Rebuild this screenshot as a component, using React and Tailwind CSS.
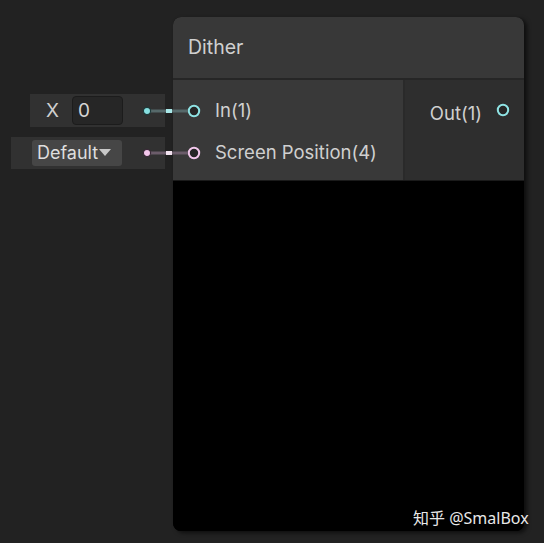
import React from "react";

function Ring({ color }) {
  return (
    <svg width="14" height="14" viewBox="0 0 14 14" className="shrink-0">
      <circle cx="7" cy="7" r="5.2" fill="#262626" stroke={color} strokeWidth="2" />
    </svg>
  );
}

export default function App() {
  const font = { fontFamily: "Inter, 'Noto Sans', sans-serif" };
  return (
    <div className="relative w-[544px] h-[543px] bg-[#222222] flex overflow-hidden" style={font}>
      {/* left fields */}
      <div className="w-[173px] shrink-0 pt-[94px] flex flex-col items-end gap-[10px]">
        <div className="w-[135px] h-[33px] mr-[8px] bg-[#313131] flex items-center">
          <span className="ml-[16px] text-[19px] text-[#cfcfcf] leading-none">X</span>
          <div className="ml-[13px] w-[51px] h-[29px] rounded-[4px] bg-[#262626] border border-[#1c1c1c] flex items-center">
            <span className="ml-[5px] text-[19px] text-[#d4d4d4] leading-none">0</span>
          </div>
        </div>
        <div className="w-[154px] h-[32px] mr-[8px] bg-[#313131] flex items-center">
          <div className="ml-[21px] w-[90px] h-[26px] rounded-[3px] bg-[#464646] flex items-center">
            <span className="ml-[5px] text-[18px] text-[#dedede] leading-none">Default</span>
            <svg width="12" height="8" viewBox="0 0 12 8" className="ml-[1px]">
              <polygon points="0,0 12,0 6,7" fill="#c8c8c8" />
            </svg>
          </div>
        </div>
      </div>

      {/* node */}
      <div className="mt-[17px] w-[351px] h-[514px] rounded-[8px] bg-black flex flex-col overflow-hidden shadow-[3px_2px_4px_rgba(0,0,0,0.6)]">
        <div className="h-[63px] shrink-0 bg-[#383838] border-b-2 border-[#262626] flex items-center pl-[15px]">
          <span className="text-[19.5px] text-[#d0d0d0]">Dither</span>
        </div>
        <div className="h-[101px] shrink-0 flex border-b border-[#1a1a1a]">
          <div className="w-[232px] bg-[#393939] border-r-2 border-[#2a2a2a] flex flex-col pt-[10px]">
            <div className="h-[42px] flex items-center pl-[14px] gap-[14px]">
              <Ring color="#8fe3e4" />
              <span className="text-[18.5px] text-[#d0d0d0]">In(1)</span>
            </div>
            <div className="h-[42px] flex items-center pl-[14px] gap-[14px]">
              <Ring color="#f3c8ec" />
              <span className="text-[18.5px] text-[#d0d0d0]">Screen Position(4)</span>
            </div>
          </div>
          <div className="flex-1 bg-[#2e2e2e] flex items-start justify-end pt-[20px] pr-[14px] gap-[14px]">
            <span className="text-[18.5px] text-[#d0d0d0] leading-[26px]">Out(1)</span>
            <div className="pt-[3px]"><Ring color="#8fe3e4" /></div>
          </div>
        </div>
        <div className="flex-1 bg-black" />
      </div>

      {/* wires */}
      <svg className="absolute left-[140px] top-[100px]" width="50" height="64" viewBox="0 0 50 64">
        <line x1="8" y1="11" x2="48" y2="11" stroke="#56696a" strokeWidth="3" />
        <rect x="26" y="9" width="6" height="4" fill="#a9e8e8" />
        <circle cx="7" cy="11" r="3.6" fill="#86dfe0" stroke="#1e3a3a" strokeWidth="1.2" />
        <line x1="8" y1="53" x2="48" y2="53" stroke="#6b5c6a" strokeWidth="3" />
        <rect x="26" y="51" width="6" height="4" fill="#f2e2ef" />
        <circle cx="7" cy="53" r="3.6" fill="#f2c6ea" stroke="#3a2a38" strokeWidth="1.2" />
      </svg>

      {/* watermark */}
      <div className="absolute left-[413px] top-[510px] text-[16px] text-[#e8e8e8] leading-none" style={{ fontFamily: "'Noto Sans', 'Noto Sans CJK SC', sans-serif" }}>
        知乎 @SmalBox
      </div>
    </div>
  );
}
